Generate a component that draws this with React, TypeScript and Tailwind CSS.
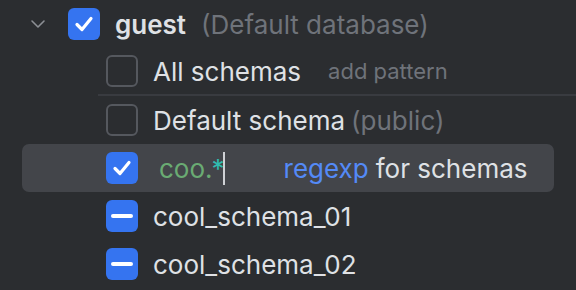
import React from 'react';

type BoxState = 'checked' | 'empty' | 'mixed';

function Box({ state }: { state: BoxState }) {
  if (state === 'empty') {
    return <div className="w-8 h-8 shrink-0 rounded-[6px] border-2 border-[#55585e]" />;
  }
  return (
    <div className="w-8 h-8 shrink-0 rounded-[6px] bg-[#3574f0] flex items-center justify-center">
      {state === 'checked' ? (
        <svg width="22" height="22" viewBox="0 0 22 22" fill="none">
          <path d="M4 11.5 L9 16.5 L18 5.5" stroke="#fff" strokeWidth="3.2" strokeLinecap="round" strokeLinejoin="round" />
        </svg>
      ) : (
        <div className="w-[22px] h-1 rounded-full bg-white" />
      )}
    </div>
  );
}

export default function App() {
  return (
    <div
      className="w-[576px] h-[290px] bg-[#2b2d30] text-[#dfe1e5] text-[26px] overflow-hidden whitespace-nowrap"
      style={{ fontFamily: 'Inter, "Noto Sans", sans-serif' }}
    >
      {/* database row */}
      <div className="h-12 flex items-center">
        <svg className="ml-[30px] mr-[22px]" width="16" height="16" viewBox="0 0 16 16" fill="none">
          <path d="M2 5 L8 11 L14 5" stroke="#8c8f94" strokeWidth="1.6" strokeLinecap="round" strokeLinejoin="round" />
        </svg>
        <Box state="checked" />
        <span className="ml-[15px] font-semibold">guest</span>
        <span className="ml-[15px] text-[#6f737a]">(Default database)</span>
      </div>

      <div className="h-[46px] flex items-center pl-[106px]">
        <Box state="empty" />
        <span className="ml-[15px]">All schemas</span>
        <span className="ml-[27px] text-[22px] text-[#6f737a]">add pattern</span>
      </div>

      <div className="ml-[98px] h-[2px] bg-[#393b40]" />

      <div className="h-12 flex items-center pl-[106px]">
        <Box state="empty" />
        <span className="ml-[15px]">Default schema</span>
        <span className="ml-[6px] text-[#6f737a]">(public)</span>
      </div>

      {/* pattern editing row */}
      <div className="h-12 flex items-center ml-[22px] mr-[22px] pl-[84px] rounded-[7px] bg-[#43454a]">
        <Box state="checked" />
        <span className="ml-[21px] text-[#6aab73]">coo.</span>
        <span className="-ml-[1px] text-[#2fbcb0]">*</span>
        <span className="-ml-[2px] w-[2px] h-[33px] bg-[#cfd1d5]" />
        <span className="ml-[59px] text-[#548af7]">regexp</span>
        <span className="ml-[7px]">for schemas</span>
      </div>

      <div className="h-12 flex items-center pl-[106px]">
        <Box state="mixed" />
        <span className="ml-[15px]">cool_schema_01</span>
      </div>

      <div className="h-12 flex items-center pl-[106px]">
        <Box state="mixed" />
        <span className="ml-[15px]">cool_schema_02</span>
      </div>
    </div>
  );
}
